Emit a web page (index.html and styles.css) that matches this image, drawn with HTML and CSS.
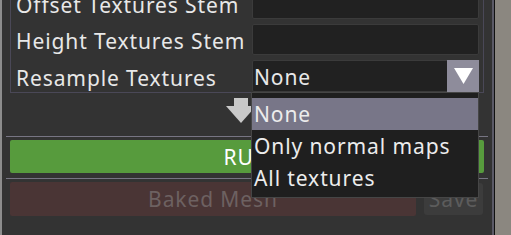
FILE: index.html
```html
<!DOCTYPE html>
<html>
<head>
<meta charset="utf-8">
<link rel="stylesheet" href="styles.css">
</head>
<body>
<div class="app">
  <div class="panel">
    <div class="group">
      <div class="row"><span class="label">Offset Textures Stem</span><div class="field"></div></div>
      <div class="row"><span class="label">Height Textures Stem</span><div class="field"></div></div>
      <div class="row row-select"><span class="label">Resample Textures</span>
        <div class="field select">
          <span class="value">None</span>
          <span class="drop-btn"><svg width="19" height="16" viewBox="0 0 19 16"><polygon points="0,0 19,0 9.5,16" fill="#ffffff"/></svg></span>
          <div class="popup">
            <div class="item active">None</div>
            <div class="item">Only normal maps</div>
            <div class="item">All textures</div>
          </div>
        </div>
      </div>
    </div>
    <div class="arrow-row"><svg width="30" height="25" viewBox="0 0 30 25"><rect x="8" y="0" width="14" height="8" fill="#c9c9c9"/><polygon points="0,8 30,8 15,25" fill="#c9c9c9"/></svg></div>
    <div class="sep"></div>
    <div class="run">RUN</div>
    <div class="sep sep2"></div>
    <div class="bake-row">
      <div class="bake">Baked Mesh</div>
      <div class="save">Save</div>
    </div>
  </div>
  <div class="edge"></div>
  <div class="side"></div>
</div>
</body>
</html>
```

FILE: styles.css
```css
* { box-sizing: border-box; }
html, body { margin: 0; padding: 0; }
body {
  width: 511px;
  height: 235px;
  overflow: hidden;
  background: #333333;
  font-family: "Noto Sans", "Open Sans", sans-serif;
  font-size: 21px;
  letter-spacing: 0.9px;
  color: #e8e8e8;
}
.app {
  display: flex;
  height: 235px;
}
.panel {
  width: 494px;
  height: 235px;
  background: #333333;
  border-left: 2px solid #8d8d8d;
  border-right: 2px solid #5b5a67;
  display: flex;
  flex-direction: column;
}
.edge {
  width: 1px;
  background: #111111;
}
.side {
  flex: 1;
  background: #8b8780;
}
.group {
  margin: -14px 8px 0 8px;
  border: 1px solid #4a4857;
  padding: 1px 4px 0 5px;
  display: flex;
  flex-direction: column;
  gap: 5px;
}
.row {
  display: flex;
  align-items: center;
  height: 31px;
}
.row-select { height: 32px; }
.label {
  flex: 1;
  white-space: nowrap;
  line-height: 31px;
  position: relative;
  top: 2px;
}
.field {
  width: 227px;
  height: 31px;
  background: #212121;
  border: 1px solid #3b3b3b;
  border-radius: 2px;
}
.select {
  height: 32px;
  display: flex;
  align-items: center;
  position: relative;
}
.value {
  flex: 1;
  padding-left: 1px;
  line-height: 30px;
  position: relative;
  top: 1px;
}
.drop-btn {
  width: 32px;
  height: 32px;
  margin: -1px -1px -1px 0;
  background: #8e8c9b;
  display: flex;
  align-items: center;
  justify-content: center;
}
.drop-btn svg { display: block; }
.popup {
  position: absolute;
  left: -2px;
  top: 31px;
  width: 228px;
  height: 106px;
  background: #1f1f1f;
  border: 1px solid #464646;
  padding-top: 5px;
  z-index: 5;
}
.item {
  height: 32px;
  line-height: 32px;
  padding-left: 2px;
  color: #ececec;
  white-space: nowrap;
}
.item.active { background: #787688; }
.arrow-row {
  margin-top: 5px;
  padding-left: 224px;
  height: 25px;
}
.arrow-row svg { display: block; }
.sep {
  margin: 13px 4px 0 4px;
  height: 1px;
  background: #777583;
}
.sep2 { margin-top: 5px; }
.run {
  margin: 3px 8px 0 8px;
  height: 33px;
  background: #579b3d;
  border-radius: 2px;
  color: #ffffff;
  text-align: center;
  line-height: 34px;
}
.bake-row {
  margin: 3px 9px 0 8px;
  display: flex;
  align-items: center;
  gap: 8px;
}
.bake {
  width: 406px;
  height: 34px;
  background: #4a3535;
  border-radius: 2px;
  color: #6d6161;
  text-align: center;
  line-height: 35px;
}
.save {
  flex: 1;
  height: 32px;
  background: #3c3c3c;
  border-radius: 3px;
  color: #5c5c5c;
  text-align: center;
  line-height: 33px;
}
```
